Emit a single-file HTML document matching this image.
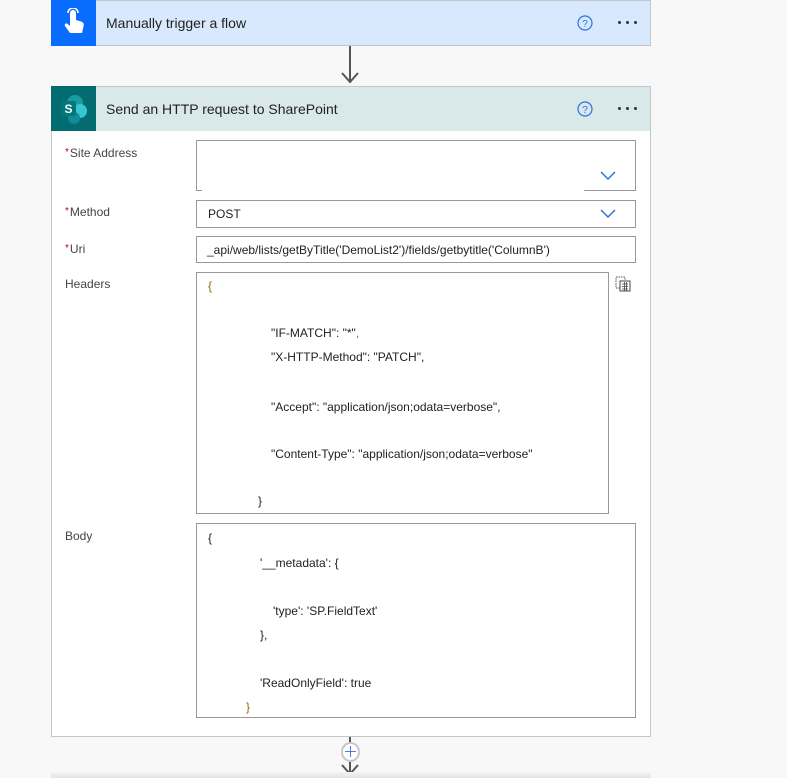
<!DOCTYPE html>
<html><head><style>
*{margin:0;padding:0;box-sizing:border-box}
body{width:787px;height:776px;background:#f8f8f8;font-family:"Liberation Sans",sans-serif;color:#222;position:relative;overflow:hidden}
.a{position:absolute}
.t{position:absolute;font-size:12px;white-space:nowrap;line-height:14px}
.lab{position:absolute;font-size:12px;color:#444;left:65px;line-height:14px}
.lab b{color:#c00;font-weight:normal;font-size:10px;vertical-align:top;margin-right:1px}
.box{position:absolute;border:1px solid #999;background:#fff}
.dots{position:absolute;width:20px;height:4px}
.dots i{position:absolute;top:0;width:3px;height:3px;border-radius:50%;background:#333}
</style></head><body>
<!-- card 1 -->
<div class="a" style="left:51px;top:0;width:600px;height:46px;background:#d8e9fd;border:1px solid #c6c6c6"></div>
<div class="a" style="left:51px;top:0;width:45px;height:46px;background:#0a6cff"></div>
<svg class="a" style="left:62px;top:8px" width="24" height="30" viewBox="0 0 24 30"><path d="M8 13V5a3 3 0 0 1 6 0v7l5 1.5c2 .6 3 2 2.7 4L20 25H8L3 18c-1-1.5 1-3.5 2.5-2.2L8 18z" fill="#fff"/><path d="M6 5a5 5 0 0 1 10 0" stroke="#fff" stroke-width="1.6" fill="none"/></svg>
<div class="a" style="left:106px;top:15px;font-size:14px">Manually trigger a flow</div>
<svg class="a" style="left:577px;top:15px" width="16" height="16"><circle cx="8" cy="8" r="7" fill="none" stroke="#2f6fe6" stroke-width="1.2"/><text x="8" y="12" font-size="10" text-anchor="middle" fill="#2f6fe6" font-family="Liberation Sans">?</text></svg>
<div class="dots" style="left:618px;top:21px"><i style="left:0"></i><i style="left:8px"></i><i style="left:16px"></i></div>
<!-- arrow -->
<div class="a" style="left:349px;top:46px;width:2px;height:36px;background:#555"></div>
<svg class="a" style="left:341px;top:72px" width="18" height="12"><path d="M1 1l8 9 8-9" stroke="#555" stroke-width="2" fill="none"/></svg>
<!-- card 2 -->
<div class="a" style="left:51px;top:86px;width:600px;height:651px;background:#fff;border:1px solid #c6c6c6"></div>
<div class="a" style="left:51px;top:86px;width:600px;height:45px;background:#d9e8e8;border:1px solid #c6c6c6;border-bottom:none"></div>
<div class="a" style="left:51px;top:86px;width:45px;height:45px;background:#036c70"></div>
<svg class="a" style="left:58px;top:94px" width="32" height="30"><circle cx="17" cy="9" r="8" fill="#1a9ba1"/><circle cx="22" cy="17" r="7" fill="#37c6d0"/><circle cx="16" cy="24" r="6" fill="#138b94"/><rect x="3" y="7" width="15" height="15" rx="2" fill="#03787c"/><text x="10.5" y="19" font-size="12" font-weight="bold" text-anchor="middle" fill="#fff" font-family="Liberation Sans">S</text></svg>
<div class="a" style="left:106px;top:101px;font-size:14px">Send an HTTP request to SharePoint</div>
<svg class="a" style="left:577px;top:101px" width="16" height="16"><circle cx="8" cy="8" r="7" fill="none" stroke="#2f6fe6" stroke-width="1.2"/><text x="8" y="12" font-size="10" text-anchor="middle" fill="#2f6fe6" font-family="Liberation Sans">?</text></svg>
<div class="dots" style="left:618px;top:107px"><i style="left:0"></i><i style="left:8px"></i><i style="left:16px"></i></div>

<div class="lab" style="top:146px"><b>*</b>Site Address</div>
<div class="a" style="left:196px;top:140px;width:440px;height:51px;border:1px solid #999;border-bottom:none;background:#fff"></div>
<div class="a" style="left:584px;top:190px;width:52px;height:1px;background:#999"></div>
<div class="a" style="left:196px;top:190px;width:6px;height:1px;background:#999"></div>
<svg class="a" style="left:600px;top:171px" width="16" height="10"><path d="M1 1l7 7 7-7" stroke="#2f6fe6" stroke-width="1.5" fill="none"/></svg>

<div class="lab" style="top:205px"><b>*</b>Method</div>
<div class="box" style="left:196px;top:200px;width:440px;height:28px"></div>
<div class="t" style="left:208px;top:207px">POST</div>
<svg class="a" style="left:600px;top:209px" width="16" height="10"><path d="M1 1l7 7 7-7" stroke="#2f6fe6" stroke-width="1.5" fill="none"/></svg>

<div class="lab" style="top:242px"><b>*</b>Uri</div>
<div class="box" style="left:196px;top:236px;width:440px;height:27px"></div>
<div class="t" style="left:207px;top:243px">_api/web/lists/getByTitle('DemoList2')/fields/getbytitle('ColumnB')</div>

<div class="lab" style="top:277px">Headers</div>
<div class="box" style="left:196px;top:272px;width:413px;height:242px"></div>
<svg class="a" style="left:615px;top:276px" width="16" height="16"><rect x="1" y="1" width="9" height="11" fill="none" stroke="#555" stroke-dasharray="1.5 1"/><rect x="5" y="5" width="10" height="10" fill="#fff" stroke="#444"/><path d="M7 8h6M7 10.5h6M7 13h6M9.5 6v9M11.5 6v9" stroke="#444" stroke-width=".8"/></svg>
<div class="t" style="left:208px;top:279px;color:#8a6d00">{</div>
<div class="t" style="left:271px;top:326px">"IF-MATCH": "*"<span style="color:#b06000">,</span></div>
<div class="t" style="left:271px;top:350px">"X-HTTP-Method": "PATCH",</div>
<div class="t" style="left:271px;top:400px">"Accept": "application/json;odata=verbose",</div>
<div class="t" style="left:271px;top:447px">"Content-Type": "application/json;odata=verbose"</div>
<div class="t" style="left:258px;top:494px">}</div>

<div class="lab" style="top:529px">Body</div>
<div class="box" style="left:196px;top:523px;width:440px;height:195px"></div>
<div class="t" style="left:208px;top:531px">{</div>
<div class="t" style="left:260px;top:556px">'__metadata': {</div>
<div class="t" style="left:273px;top:604px">'type': 'SP.FieldText'</div>
<div class="t" style="left:260px;top:628px">},</div>
<div class="t" style="left:260px;top:676px">'ReadOnlyField': true</div>
<div class="t" style="left:246px;top:700px;color:#8a6d00">}</div>

<!-- bottom connector -->
<div class="a" style="left:349px;top:737px;width:2px;height:6px;background:#555"></div>
<div class="a" style="left:341px;top:742px;width:19px;height:20px;border-radius:50%;border:2px solid #c8c8c8;background:#fff"></div>
<div class="a" style="left:345px;top:751px;width:11px;height:1px;background:#4a7fd8"></div>
<div class="a" style="left:350px;top:746px;width:1px;height:11px;background:#4a7fd8"></div>
<div class="a" style="left:349px;top:762px;width:2px;height:14px;background:#555"></div>
<svg class="a" style="left:341px;top:764px" width="18" height="12"><path d="M1 1l8 9 8-9" stroke="#555" stroke-width="2" fill="none"/></svg>
<div class="a" style="left:51px;top:772px;width:600px;height:6px;background:linear-gradient(#f4f4f4,#e2e2e2)"></div>
</body></html>
